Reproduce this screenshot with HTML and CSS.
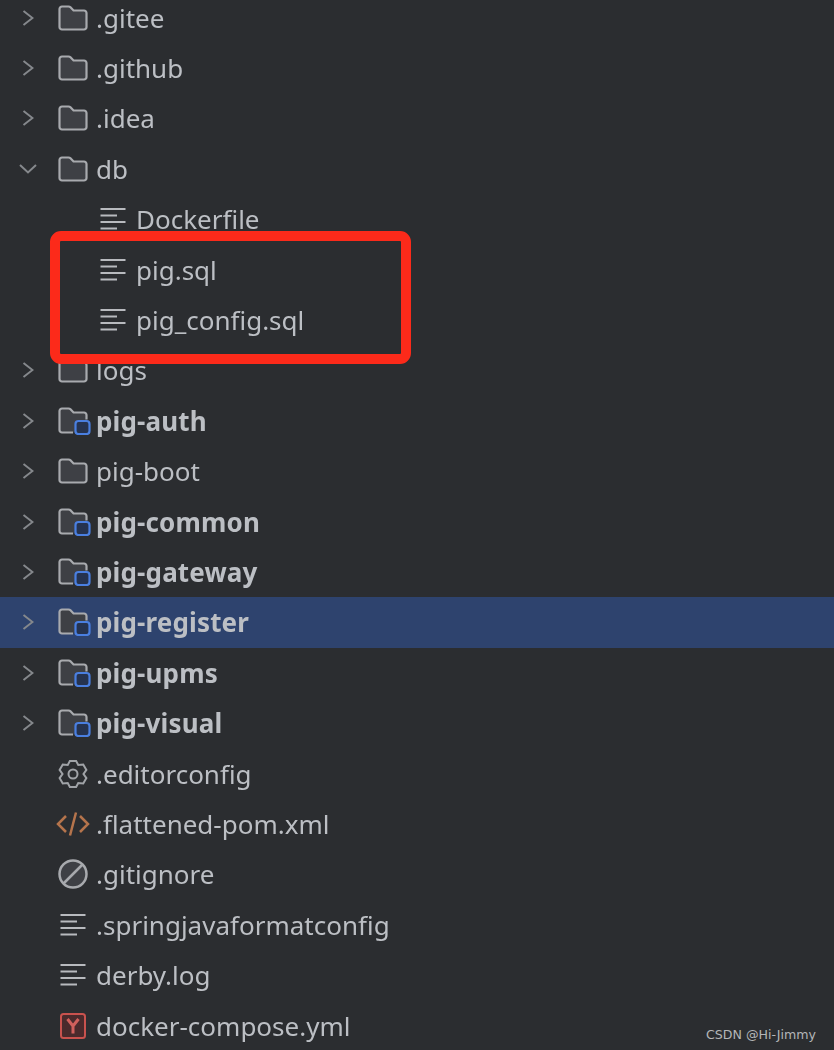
FILE: index.html
```html
<!DOCTYPE html>
<html lang="en">
<head>
    <meta charset="UTF-8">
    <title>Project</title>
    <link rel="stylesheet" href="styles.css">
</head>
<body>
    <svg class="defs" width="0" height="0">
        <symbol id="arrow-right" viewBox="0 0 12 16"><path d="M1.500 1l9 7-9 7"/></symbol>
        <symbol id="arrow-down" viewBox="0 0 18 10"><path d="M1 1l8 7.500 8-7.500"/></symbol>
        <symbol id="folder" viewBox="0 0 30 26"><path d="M1.500 4a2.500 2.500 0 0 1 2.500-2.500h6.500q1.200 0 2 .8l3 3.200h10.500a2.500 2.500 0 0 1 2.500 2.500v14a2.500 2.500 0 0 1-2.500 2.500h-22a2.500 2.500 0 0 1-2.500-2.500z"/></symbol>
        <symbol id="module" viewBox="0 0 34 28"><path class="fill-only" d="M1.500 4a2.500 2.500 0 0 1 2.500-2.500h6.500q1.200 0 2 .8l3 3.200h10.500a2.500 2.500 0 0 1 2.500 2.500v5.500h-10v12h-15a2.500 2.500 0 0 1-2.500-2.500z"/><path class="line-only" d="M15 25.500h-11a2.500 2.500 0 0 1-2.500-2.500v-19a2.500 2.500 0 0 1 2.500-2.500h6.500q1.200 0 2 .8l3 3.200h10.500a2.500 2.500 0 0 1 2.500 2.500v4.500"/><rect class="badge" x="17.500" y="14" width="14" height="13" rx="3"/></symbol>
        <symbol id="lines" viewBox="0 0 26 24"><path d="M0.500 2h25M0.500 8.500h16.500M0.500 15h25M0.500 21.500h16.500"/></symbol>
        <symbol id="gear" viewBox="0 0 30 28"><path d="M11.850 1h6.300l2.100 3.910 4.990-.46 3.150 5.460-2.890 4.090 2.890 4.090-3.150 5.460-4.990-.46-2.100 3.910h-6.300l-2.100-3.910-4.990.46-3.150-5.460 2.890-4.090-2.890-4.090 3.150-5.460 4.990.46z"/><circle cx="15" cy="14" r="4.500"/></symbol>
        <symbol id="xml" viewBox="0 0 34 26"><path d="M10 5l-8 8 8 8M24 5l8 8-8 8M20 1.500l-6 23"/></symbol>
        <symbol id="ignore" viewBox="0 0 30 30"><circle cx="15" cy="15" r="13.500"/><path d="M5.500 24.500l19-19"/></symbol>
        <symbol id="yaml" viewBox="0 0 26 26"><rect x="1" y="1" width="24" height="24" rx="2.500"/><path class="letter" d="M7.500 6l5.500 7 5.500-7M13 13v7.500"/></symbol>
    </svg>

    <ul class="tree">
        <li class="row"><svg class="arrow"><use href="#arrow-right"/></svg><svg class="icon folder"><use href="#folder"/></svg><span>.gitee</span></li>
        <li class="row"><svg class="arrow"><use href="#arrow-right"/></svg><svg class="icon folder"><use href="#folder"/></svg><span>.github</span></li>
        <li class="row"><svg class="arrow"><use href="#arrow-right"/></svg><svg class="icon folder"><use href="#folder"/></svg><span>.idea</span></li>
        <li class="row"><svg class="arrow down"><use href="#arrow-down"/></svg><svg class="icon folder"><use href="#folder"/></svg><span>db</span></li>
        <li class="row nested"><svg class="icon lines"><use href="#lines"/></svg><span>Dockerfile</span></li>
        <li class="row nested"><svg class="icon lines"><use href="#lines"/></svg><span>pig.sql</span></li>
        <li class="row nested"><svg class="icon lines"><use href="#lines"/></svg><span>pig_config.sql</span></li>
        <li class="row"><svg class="arrow"><use href="#arrow-right"/></svg><svg class="icon folder"><use href="#folder"/></svg><span>logs</span></li>
        <li class="row bold"><svg class="arrow"><use href="#arrow-right"/></svg><svg class="icon module"><use href="#module"/></svg><span>pig-auth</span></li>
        <li class="row"><svg class="arrow"><use href="#arrow-right"/></svg><svg class="icon folder"><use href="#folder"/></svg><span>pig-boot</span></li>
        <li class="row bold"><svg class="arrow"><use href="#arrow-right"/></svg><svg class="icon module"><use href="#module"/></svg><span>pig-common</span></li>
        <li class="row bold"><svg class="arrow"><use href="#arrow-right"/></svg><svg class="icon module"><use href="#module"/></svg><span>pig-gateway</span></li>
        <li class="row bold selected"><svg class="arrow"><use href="#arrow-right"/></svg><svg class="icon module"><use href="#module"/></svg><span>pig-register</span></li>
        <li class="row bold"><svg class="arrow"><use href="#arrow-right"/></svg><svg class="icon module"><use href="#module"/></svg><span>pig-upms</span></li>
        <li class="row bold"><svg class="arrow"><use href="#arrow-right"/></svg><svg class="icon module"><use href="#module"/></svg><span>pig-visual</span></li>
        <li class="row file"><svg class="icon gear"><use href="#gear"/></svg><span>.editorconfig</span></li>
        <li class="row file"><svg class="icon xml"><use href="#xml"/></svg><span>.flattened-pom.xml</span></li>
        <li class="row file"><svg class="icon ignore"><use href="#ignore"/></svg><span>.gitignore</span></li>
        <li class="row file"><svg class="icon lines"><use href="#lines"/></svg><span>.springjavaformatconfig</span></li>
        <li class="row file"><svg class="icon lines"><use href="#lines"/></svg><span>derby.log</span></li>
        <li class="row file"><svg class="icon yaml"><use href="#yaml"/></svg><span>docker-compose.yml</span></li>
    </ul>

    <div class="mark"></div>
    <div class="watermark">CSDN @Hi-Jimmy</div>
</body>
</html>
```

FILE: styles.css
```css
html,body{
    margin:0;
    height:100%;
}
body{
    background:#2b2d30;
    color:#bcbfc4;
    font-family:"Noto Sans","Liberation Sans",sans-serif;
    font-size:26px;
    overflow:hidden;
    position:relative;
}
ul{
    margin:0;
    padding:0;
}
li{
    list-style:none;
}
.defs{
    position:absolute;
}

.tree{
    margin-top:-7.500px;
    filter:blur(.45px);
}
.row{
    height:50.4px;
    display:flex;
    align-items:center;
    padding-left:22px;
    white-space:nowrap;
}
.row.bold{
    font-weight:700;
    letter-spacing:.15px;
}
.row.selected{
    background:#2e436e;
}
.row.nested{
    padding-left:100px;
}
.row.file{
    padding-left:58px;
}
.row.nested span{
    margin-left:-1px;
}

/* 箭头 */
.arrow{
    width:12px;
    height:16px;
    margin-right:24px;
    flex:none;
    fill:none;
    stroke:#85888c;
    stroke-width:2;
}
.arrow.down{
    width:18px;
    height:10px;
    margin-left:-3px;
    margin-right:21px;
}

/* 图标 */
.icon{
    flex:none;
    margin-right:8px;
}
.folder{
    width:30px;
    height:26px;
    fill:#3e4045;
    stroke:#a8aaae;
    stroke-width:2.200;
}
.module{
    width:34px;
    height:28px;
    margin-right:4px;
}
.fill-only{
    fill:#3e4045;
}
.line-only{
    fill:none;
    stroke:#a8aaae;
    stroke-width:2.200;
}
.badge{
    fill:#26334f;
    stroke:#4a7fe0;
    stroke-width:2.200;
}
.lines{
    width:26px;
    height:24px;
    margin-right:11px;
    fill:none;
    stroke:#b8babe;
    stroke-width:2;
}
.file .lines{
    margin-left:2px;
    margin-right:10px;
}
.gear{
    width:30px;
    height:28px;
    fill:none;
    stroke:#a0a3a7;
    stroke-width:2;
}
.xml{
    width:34px;
    height:26px;
    margin-left:-2px;
    margin-right:6px;
    fill:none;
    stroke:#b5744c;
    stroke-width:2.500;
}
.ignore{
    width:30px;
    height:30px;
    fill:#3e4045;
    stroke:#a8aaae;
    stroke-width:2.500;
}
.yaml{
    width:26px;
    height:26px;
    margin-left:2px;
    margin-right:10px;
    fill:#4a2a2c;
    stroke:#c9524e;
    stroke-width:2;
}
.letter{
    fill:none;
    stroke:#d0605c;
    stroke-width:3;
}

/* 红框和水印 */
.mark{
    position:absolute;
    left:50px;
    top:231px;
    width:361px;
    height:133px;
    box-sizing:border-box;
    border:10px solid #fc2a1a;
    border-radius:11px;
}
.watermark{
    position:absolute;
    right:18px;
    bottom:8px;
    font-family:"DejaVu Sans","Liberation Sans",sans-serif;
    font-size:12.600px;
    color:#b4b6b8;
}
```
